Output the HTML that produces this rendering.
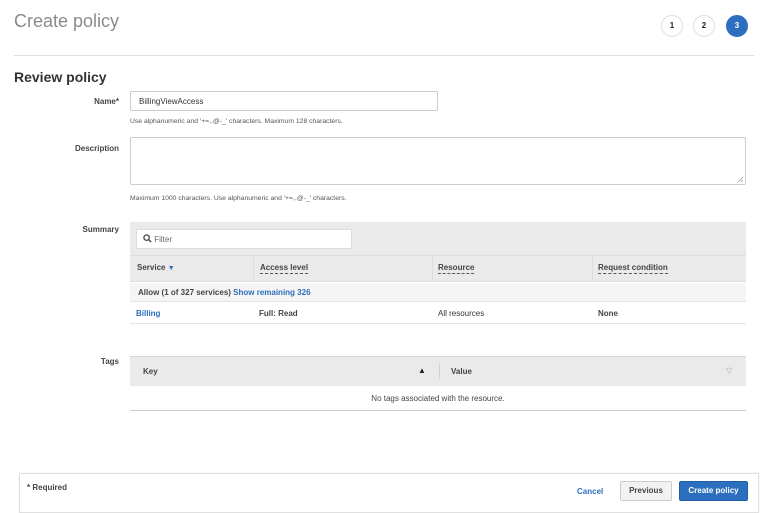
<!DOCTYPE html>
<html><head><meta charset="utf-8"><style>
*{box-sizing:border-box;margin:0;padding:0}
body{width:768px;height:506px;background:#fff;font-family:"Liberation Sans",Arial,sans-serif;color:#333;position:relative;overflow:hidden;font-size:8px}
.a{position:absolute}
.c{width:22px;height:22px;border-radius:50%;border:1px solid #ddd;text-align:center;line-height:20px;font-weight:bold;font-size:8px;color:#222}
.lbl{position:absolute;right:649px;font-weight:bold;font-size:8px;color:#444;text-align:right}
.hint{position:absolute;left:130px;font-size:6.8px;color:#555}
.th{position:absolute;top:263px;font-weight:bold;font-size:8px;color:#444}
.dot{border-bottom:1px dashed #555;padding-bottom:1px}
.td{position:absolute;top:309px;font-size:8px;color:#333}
</style></head><body>
<div class="a" style="left:14px;top:11px;font-size:18px;color:#8a8a8a">Create policy</div>
<div class="a c" style="left:661px;top:15px">1</div>
<div class="a c" style="left:693px;top:15px">2</div>
<div class="a c" style="left:726px;top:15px;background:#2c6fbf;border-color:#2c6fbf;color:#fff">3</div>
<div class="a" style="left:14px;top:55px;width:740px;height:1px;background:#ddd"></div>
<div class="a" style="left:14px;top:69px;font-size:14px;font-weight:bold;color:#333">Review policy</div>
<div class="lbl" style="top:97px">Name*</div>
<div class="a" style="left:130px;top:91px;width:308px;height:20px;border:1px solid #ccc;border-radius:2px;padding:5px 8px;font-size:8px;color:#333">BillingViewAccess</div>
<div class="hint" style="top:118px">Use alphanumeric and '+=,.@-_' characters. Maximum 128 characters.</div>
<div class="lbl" style="top:144px">Description</div>
<div class="a" style="left:130px;top:137px;width:616px;height:48px;border:1px solid #ccc;border-radius:2px"></div>
<svg class="a" style="left:737px;top:176px" width="7" height="7" viewBox="0 0 7 7"><path d="M6 1L1 6M6 4L4 6" stroke="#999" stroke-width="0.8"/></svg>
<div class="hint" style="top:195px">Maximum 1000 characters. Use alphanumeric and '+=,.@-_' characters.</div>
<div class="lbl" style="top:225px">Summary</div>
<div class="a" style="left:130px;top:222px;width:616px;height:60px;background:#eaeaea;border-bottom:1px solid #ddd"></div>
<div class="a" style="left:136px;top:229px;width:216px;height:20px;background:#fff;border:1px solid #ddd;border-radius:2px;padding:4px 6px;font-size:8px;color:#666">
<svg width="9" height="9" viewBox="0 0 10 10" style="vertical-align:-1px"><circle cx="4" cy="4" r="3" fill="none" stroke="#444" stroke-width="1.4"/><path d="M6.3 6.3L9 9" stroke="#444" stroke-width="1.5"/></svg> Filter</div>
<div class="a" style="left:130px;top:255px;width:616px;height:1px;background:#ddd"></div>
<div class="a" style="left:253px;top:256px;width:1px;height:26px;background:#ddd"></div>
<div class="a" style="left:432px;top:256px;width:1px;height:26px;background:#ddd"></div>
<div class="a" style="left:592px;top:256px;width:1px;height:26px;background:#ddd"></div>
<div class="th" style="left:137px">Service <span style="color:#2c6fbf;font-size:7px">▼</span></div>
<div class="th" style="left:260px"><span class="dot">Access level</span></div>
<div class="th" style="left:438px"><span class="dot">Resource</span></div>
<div class="th" style="left:598px"><span class="dot">Request condition</span></div>
<div class="a" style="left:130px;top:283px;width:616px;height:19px;background:#f5f5f5;border-bottom:1px solid #e5e5e5;padding:5px 8px;font-weight:bold;font-size:8px;color:#444">Allow (1 of 327 services) <span style="color:#2c6fbf">Show remaining 326</span></div>
<div class="td" style="left:136px;color:#2c6fbf;font-weight:bold">Billing</div>
<div class="td" style="left:259px;font-weight:bold;color:#444">Full: Read</div>
<div class="td" style="left:438px">All resources</div>
<div class="td" style="left:598px;font-weight:bold;color:#444">None</div>
<div class="a" style="left:130px;top:323px;width:616px;height:1px;background:#e5e5e5"></div>
<div class="lbl" style="top:357px">Tags</div>
<div class="a" style="left:130px;top:356px;width:616px;height:30px;background:#eaeaea;border-top:1px solid #d5d5d5"></div>
<div class="a" style="left:439px;top:363px;width:1px;height:16px;background:#d0d0d0"></div>
<div class="a" style="left:143px;top:367px;font-weight:bold;color:#444">Key</div>
<div class="a" style="left:418px;top:366px;font-size:8px;color:#222">▲</div>
<div class="a" style="left:451px;top:367px;font-weight:bold;color:#444">Value</div>
<div class="a" style="left:726px;top:366px;font-size:8px;color:#aaa">▽</div>
<div class="a" style="left:130px;top:386px;width:616px;height:25px;border-bottom:1px solid #ccc;text-align:center;padding-top:8px;font-size:8px;color:#444">No tags associated with the resource.</div>
<div class="a" style="left:19px;top:473px;width:740px;height:40px;border:1px solid #e0e0e0;box-shadow:0 0 2px rgba(0,0,0,.08)"></div>
<div class="a" style="left:27px;top:483px;font-size:8px;font-weight:bold;color:#444">* Required</div>
<div class="a" style="left:577px;top:487px;font-size:8px;font-weight:bold;color:#2c6fbf">Cancel</div>
<div class="a" style="left:620px;top:481px;width:52px;height:20px;background:#f2f2f2;border:1px solid #ccc;border-radius:2px;text-align:center;line-height:18px;font-weight:bold;color:#444">Previous</div>
<div class="a" style="left:679px;top:481px;width:69px;height:20px;background:#2c6fbf;border:1px solid #1f5fa8;border-radius:2px;text-align:center;line-height:18px;font-weight:bold;color:#fff">Create policy</div>
</body></html>
